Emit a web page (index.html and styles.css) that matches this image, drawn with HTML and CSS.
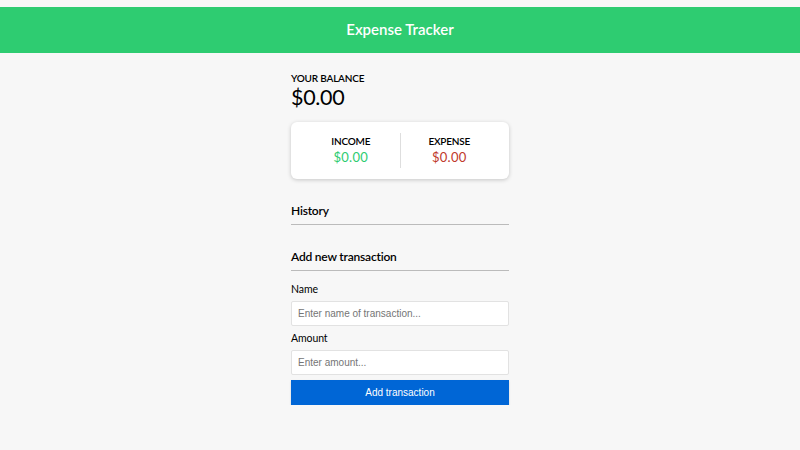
FILE: index.html
```html
<!DOCTYPE html>
<html lang="en">
<head>
    <meta charset="UTF-8">
    <meta name="viewport" content="width=device-width, initial-scale=1.0">
    <title>Expense Tracker</title>
    <link rel="stylesheet" href="styles.css">
</head>
<body>
    <header class="header">Expense Tracker</header>
    <div class="container">
        <h4 class="balance-label">Your Balance</h4>
        <h1 class="balance">$0.00</h1>

        <div class="inc-exp">
            <div class="inc-exp-col">
                <h4>Income</h4>
                <p class="money plus">$0.00</p>
            </div>
            <div class="inc-exp-col">
                <h4>Expense</h4>
                <p class="money minus">$0.00</p>
            </div>
        </div>

        <h3 class="section-title">History</h3>
        <ul class="list"></ul>

        <h3 class="section-title">Add new transaction</h3>
        <form class="form">
            <div class="form-control">
                <label for="text">Name</label>
                <input type="text" id="text" placeholder="Enter name of transaction...">
            </div>
            <div class="form-control">
                <label for="amount">Amount</label>
                <input type="number" id="amount" placeholder="Enter amount...">
            </div>
            <button class="btn" type="button">Add transaction</button>
        </form>
    </div>
</body>
</html>
```

FILE: styles.css
```css
* {
    box-sizing: border-box;
}

body {
    margin: 0;
    padding-top: 7px;
    background: #f7f7f7;
    font-family: Lato, "Noto Sans", sans-serif;
    color: #000;
}

.header {
    display: flex;
    align-items: center;
    justify-content: center;
    height: 46px;
    padding-bottom: 3px;
    background: #2ecc71;
    color: #ffffff;
    font-size: 15px;
    font-weight: 600;
}

.container {
    width: 218px;
    margin: 18px auto 0;
}

h1, h3, h4, p {
    margin: 0;
}

.balance-label {
    font-size: 10px;
    font-weight: 600;
    text-transform: uppercase;
    line-height: 14px;
    letter-spacing: -0.2px;
}

.balance {
    font-size: 21.5px;
    font-weight: normal;
    line-height: 24px;
    letter-spacing: -0.3px;
}

.inc-exp {
    display: flex;
    align-items: center;
    margin-top: 13px;
    height: 57px;
    padding: 0 11px;
    background: #ffffff;
    border-radius: 6px;
    box-shadow: 0 1px 4px rgba(0, 0, 0, 0.2);
}

.inc-exp-col {
    flex: 1;
    text-align: center;
}

.inc-exp-col:first-of-type {
    border-right: 1px solid #dedede;
    padding: 1px 0;
}

.inc-exp-col h4 {
    font-size: 10px;
    font-weight: 600;
    text-transform: uppercase;
    line-height: 14px;
    letter-spacing: -0.2px;
}

.money {
    font-size: 13px;
    line-height: 19px;
    letter-spacing: 0.3px;
}

.money.plus {
    color: #2ecc71;
}

.money.minus {
    color: #c0392b;
}

.section-title {
    font-size: 12px;
    font-weight: 600;
    line-height: 16px;
    padding-bottom: 5px;
    border-bottom: 1px solid #bbb;
    margin-top: 24px;
    letter-spacing: -0.2px;
}

.list {
    margin: 0;
    padding: 0;
}

.form {
    margin-top: 11px;
}

.form-control label {
    display: block;
    font-size: 10.5px;
    line-height: 14px;
    margin-bottom: 5px;
    letter-spacing: -0.1px;
}

.form-control input {
    display: block;
    width: 100%;
    height: 25px;
    padding: 0 6px;
    border: 1px solid #e2e2e2;
    border-radius: 2px;
    background: #ffffff;
    font-family: "Liberation Sans", Arial, sans-serif;
    font-size: 10px;
    margin-bottom: 5px;
}

.form-control input::placeholder {
    color: #757575;
}

.btn {
    display: block;
    width: 100%;
    height: 25px;
    margin-top: 2px;
    border: 0;
    background: #0066d6;
    color: #ffffff;
    font-family: "Liberation Sans", Arial, sans-serif;
    font-size: 10px;
    box-shadow: 0 1px 2px rgba(0, 0, 0, 0.15);
}
```
